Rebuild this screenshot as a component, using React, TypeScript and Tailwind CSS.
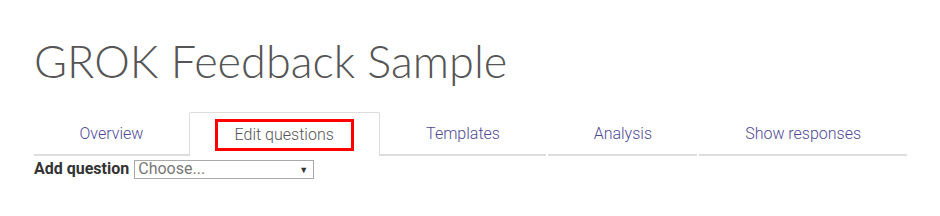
import React from 'react';

const tabs = [
  { label: 'Overview', w: 'w-[155px]' },
  { label: 'Edit questions', w: 'w-[191px]', active: true },
  { label: 'Templates', w: 'w-[167px]' },
  { label: 'Analysis', w: 'w-[149px] ml-[2px]' },
  { label: 'Show responses', w: 'w-[208px] ml-[2px]' },
];

export default function App() {
  return (
    <div className="w-[940px] h-[216px] bg-white pl-[34px] pt-[33px] font-['Roboto',sans-serif]">
      <h1 className="font-['Lato',sans-serif] text-[45px] leading-[56px] text-[#555] font-light h-[79px]">
        GROK Feedback Sample
      </h1>

      {/* tab strip */}
      <div className="flex w-[873px] h-[44px]">
        {tabs.map(t =>
          t.active ? (
            <div
              key={t.label}
              className={`${t.w} flex items-center justify-center border border-b-0 border-[#ddd] rounded-t-[2px]`}
            >
              <span className="border-[3px] border-[#f00] w-[139px] h-[32px] flex items-center justify-center text-[16px] font-light text-[#555]">
                {t.label}
              </span>
            </div>
          ) : (
            <div
              key={t.label}
              className={`${t.w} flex items-center justify-center border-b-2 border-[#ddd] text-[16px] font-light text-[#4e4a96] pt-[2px]`}
            >
              {t.label}
            </div>
          )
        )}
      </div>

      <div className="flex items-center mt-[1px] gap-[5px]">
        <span className="text-[16px] font-bold text-[#333]">Add question</span>
        <div className="relative w-[180px] h-[19px] border border-[#a9a9a9] bg-white flex items-center pl-[3px] text-[16px] text-[#777]">
          Choose...
          <span className="absolute right-[5px] top-[3px] text-[9px] text-[#333]">▼</span>
        </div>
      </div>
    </div>
  );
}
